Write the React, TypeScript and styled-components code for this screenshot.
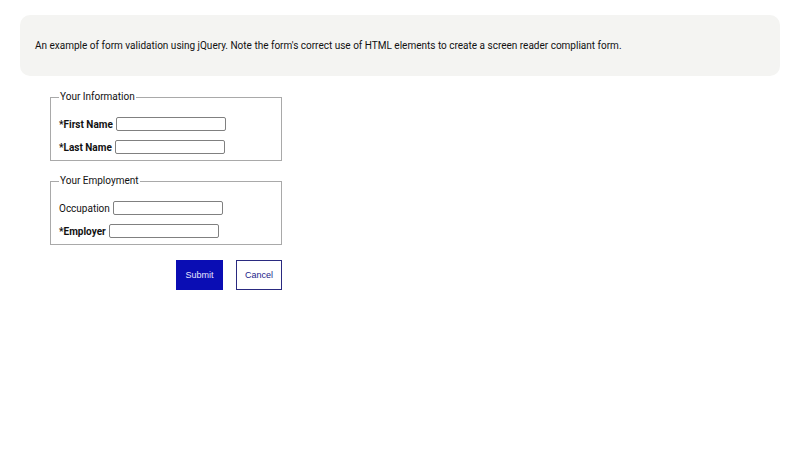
import React from "react";
import styled, { createGlobalStyle } from "styled-components";

const GlobalStyle = createGlobalStyle`
  body {
    margin: 0;
    background: #ffffff;
    font-family: Roboto, "Liberation Sans", sans-serif;
    color: #111;
  }
`;

const Page = styled.div`
  padding: 15px 20px;
`;

const Intro = styled.div`
  background: #f4f4f2;
  border-radius: 10px;
  padding: 22px 15px;
  font-size: 10px;
  line-height: 17px;
`;

const Form = styled.form`
  margin: 14px 0 0 30px;
  width: 232px;
  display: flex;
  flex-direction: column;
  gap: 13px;
`;

const FieldSet = styled.fieldset`
  margin: 0;
  padding: 10px 8px 3px;
  border: 1px solid #a9a9a9;
  display: flex;
  flex-direction: column;
  gap: 3px;
`;

const Legend = styled.legend`
  padding: 0 1px;
  font-size: 10px;
  line-height: 14px;
`;

const Row = styled.div`
  display: flex;
  align-items: center;
  gap: 3px;
  height: 20px;
`;

const Label = styled.label<{ $required?: boolean }>`
  font-size: 10px;
  font-weight: ${(p) => (p.$required ? 700 : 400)};
`;

const Input = styled.input`
  box-sizing: border-box;
  width: 110px;
  height: 14px;
  padding: 0 2px;
  border: 1px solid #808080;
  border-radius: 2px;
  font-size: 9px;
`;

const Actions = styled.div`
  display: flex;
  justify-content: flex-end;
  gap: 13px;
  margin-top: 2px;
`;

const Button = styled.button<{ $primary?: boolean }>`
  box-sizing: border-box;
  width: ${(p) => (p.$primary ? "47px" : "46px")};
  height: 30px;
  padding: 0;
  font: 9px "Liberation Sans", Arial, sans-serif;
  background: ${(p) => (p.$primary ? "#0a0db4" : "#ffffff")};
  color: ${(p) => (p.$primary ? "#e8e8ff" : "#1a1a8a")};
  border: 1px solid ${(p) => (p.$primary ? "#0a0db4" : "#2a2a80")};
  cursor: pointer;
`;

const fields = [
  {
    legend: "Your Information",
    items: [
      { id: "first", label: "*First Name", required: true },
      { id: "last", label: "*Last Name", required: true },
    ],
  },
  {
    legend: "Your Employment",
    items: [
      { id: "occupation", label: "Occupation", required: false },
      { id: "employer", label: "*Employer", required: true },
    ],
  },
];

export default function App() {
  return (
    <Page>
      <GlobalStyle />
      <Intro>
        An example of form validation using jQuery. Note the form's correct use of HTML elements to create a screen
        reader compliant form.
      </Intro>
      <Form onSubmit={(e) => e.preventDefault()}>
        {fields.map((group) => (
          <FieldSet key={group.legend}>
            <Legend>{group.legend}</Legend>
            {group.items.map((f) => (
              <Row key={f.id}>
                <Label htmlFor={f.id} $required={f.required}>
                  {f.label}
                </Label>
                <Input id={f.id} type="text" />
              </Row>
            ))}
          </FieldSet>
        ))}
        <Actions>
          <Button type="submit" $primary>
            Submit
          </Button>
          <Button type="button">Cancel</Button>
        </Actions>
      </Form>
    </Page>
  );
}
